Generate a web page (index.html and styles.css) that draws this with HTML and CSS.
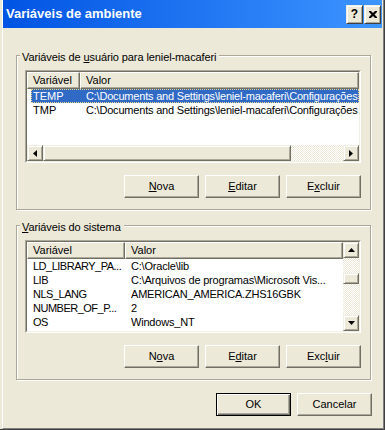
FILE: index.html
```html
<!DOCTYPE html>
<html lang="pt">
<head>
<meta charset="utf-8">
<title>Variáveis de ambiente</title>
<link rel="stylesheet" href="styles.css">
</head>
<body>
<div class="window">
  <div class="frame">
    <div class="titlebar">
      <span class="title">Variáveis de ambiente</span>
      <div class="tbtns">
        <span class="tbtn help">?</span>
        <span class="tbtn close"><svg width="8" height="7" viewBox="0 0 8 7"><path d="M0 0h2l2 2 2-2h2v1L5.5 3.5 8 6v1H6L4 5 2 7H0V6l2.5-2.5L0 1z"/></svg></span>
      </div>
    </div>
    <div class="client">
      <section class="group g1">
        <div class="legend">Variáveis de <u>u</u>suário para leniel-macaferi</div>
        <div class="lv">
          <div class="lv-in col">
            <div class="lv-head">
              <div class="hcol u1">Variável</div>
              <div class="hcol rest">Valor</div>
            </div>
            <div class="lv-rows">
              <div class="row sel"><span class="cell u1">TEMP</span><span class="cell c2">C:\Documents and Settings\leniel-macaferi\Configurações</span></div>
              <div class="row"><span class="cell u1">TMP</span><span class="cell c2">C:\Documents and Settings\leniel-macaferi\Configurações</span></div>
            </div>
            <div class="hscroll">
              <span class="sb-btn"><svg width="4" height="7" viewBox="0 0 4 7"><path d="M4 0v7L0 3.5z"/></svg></span>
              <span class="thumb-h"></span>
              <span class="track"></span>
              <span class="sb-btn"><svg width="4" height="7" viewBox="0 0 4 7"><path d="M0 0v7l4-3.5z"/></svg></span>
            </div>
          </div>
        </div>
        <div class="btnrow">
          <button class="btn"><u>N</u>ova</button>
          <button class="btn"><u>E</u>ditar</button>
          <button class="btn">E<u>x</u>cluir</button>
        </div>
      </section>

      <section class="group g2">
        <div class="legend"><u>V</u>ariáveis do sistema</div>
        <div class="lv">
          <div class="lv-in rowdir">
            <div class="lv-body">
              <div class="lv-head">
                <div class="hcol s1">Variável</div>
                <div class="hcol rest">Valor</div>
              </div>
              <div class="lv-rows">
                <div class="row"><span class="cell s1">LD_LIBRARY_PA...</span><span class="cell c2">C:\Oracle\lib</span></div>
                <div class="row"><span class="cell s1">LIB</span><span class="cell c2">C:\Arquivos de programas\Microsoft Vis...</span></div>
                <div class="row"><span class="cell s1">NLS_LANG</span><span class="cell c2">AMERICAN_AMERICA.ZHS16GBK</span></div>
                <div class="row"><span class="cell s1">NUMBER_OF_P...</span><span class="cell c2">2</span></div>
                <div class="row"><span class="cell s1">OS</span><span class="cell c2">Windows_NT</span></div>
                <div class="row"><span class="cell s1">Os2LibPath</span><span class="cell c2">C:\WINDOWS\system32\os2\dll;</span></div>
              </div>
            </div>
            <div class="vscroll">
              <span class="sb-btn"><svg width="7" height="4" viewBox="0 0 7 4"><path d="M0 4h7L3.5 0z"/></svg></span>
              <span class="track t1"></span>
              <span class="thumb-v"></span>
              <span class="track t2"></span>
              <span class="sb-btn"><svg width="7" height="4" viewBox="0 0 7 4"><path d="M0 0h7L3.5 4z"/></svg></span>
            </div>
          </div>
        </div>
        <div class="btnrow">
          <button class="btn">N<u>o</u>va</button>
          <button class="btn">E<u>d</u>itar</button>
          <button class="btn">Exc<u>l</u>uir</button>
        </div>
      </section>

      <div class="dlgbtns">
        <button class="btn default">OK</button>
        <button class="btn">Cancelar</button>
      </div>
    </div>
  </div>
</div>
</body>
</html>
```

FILE: styles.css
```css
* { box-sizing: border-box; }
html, body { margin: 0; padding: 0; }
body {
  font: 11px/13px "Liberation Sans", Arial, sans-serif;
  color: #000;
  background: #ECE9D8;
}
u { text-underline-offset: 1px; }

.window {
  width: 385px;
  height: 430px;
  background: #ECE9D8;
  padding-left: 2px;
  border-right: 1px solid #404040;
  border-bottom: 1px solid #404040;
}
.frame {
  height: 100%;
  border-left: 1px solid #fff;
  border-right: 1px solid #808080;
  border-bottom: 1px solid #808080;
  padding: 0 1px 1px 0;
  display: flex;
  flex-direction: column;
}

.titlebar {
  height: 28px;
  flex: none;
  background: linear-gradient(to right, #0054E3, #3D95FF);
  display: flex;
  align-items: center;
  justify-content: space-between;
  padding: 0 1px 0 3px;
}
.title {
  color: #fff;
  font-weight: bold;
  font-size: 13px;
  line-height: 16px;
}
.tbtns { display: flex; gap: 1px; }
.tbtn {
  width: 17px;
  height: 19px;
  background: #ECE9D8;
  border: 1px solid;
  border-color: #F1EFE2 #404040 #404040 #F1EFE2;
  box-shadow: inset 1px 1px 0 #fff, inset -1px -1px 0 #ACA899;
  display: flex;
  align-items: center;
  justify-content: center;
}
.tbtn.help { font-weight: bold; font-size: 12px; }
.tbtn svg { fill: #000; }

.client {
  flex: 1;
  padding-left: 13px;
}

.group {
  width: 355px;
  height: 155px;
  border: 1px solid #ACA899;
  box-shadow: 1px 1px 0 #fff, inset 1px 1px 0 #fff;
  padding: 0 9px 0 8px;
}
.g1 { margin-top: 27px; }
.g2 { margin-top: 15px; }
.legend {
  width: fit-content;
  margin: -5px 0 0 -5px;
  padding: 0 3px 0 2px;
  background: #ECE9D8;
  line-height: 13px;
  white-space: nowrap;
  letter-spacing: -0.1px;
}

.lv {
  width: 336px;
  height: 93px;
  margin-top: 6px;
  border: 1px solid;
  border-color: #ACA899 #fff #fff #ACA899;
}
.lv-in {
  height: 100%;
  border: 1px solid;
  border-color: #716F64 #F1EFE2 #F1EFE2 #716F64;
  background: #fff;
  overflow: hidden;
  display: flex;
}
.lv-in.col { flex-direction: column; }
.lv-in.rowdir { flex-direction: row; }
.lv-body {
  flex: 1;
  min-width: 0;
  display: flex;
  flex-direction: column;
}

.lv-head { display: flex; height: 17px; flex: none; }
.hcol {
  height: 17px;
  background: #ECE9D8;
  border: 1px solid;
  border-color: #fff #716F64 #716F64 #fff;
  box-shadow: inset -1px -1px 0 #ACA899;
  padding-left: 5px;
  line-height: 14px;
  white-space: nowrap;
  overflow: hidden;
}
.hcol.u1 { width: 53px; }
.hcol.s1 { width: 98px; }
.hcol.rest { flex: 1; }

.lv-rows { flex: 1; overflow: hidden; }
.row {
  display: flex;
  height: 14px;
  line-height: 14px;
  margin-left: 4px;
  white-space: nowrap;
}
.cell { overflow: hidden; }
.cell.u1 { width: 49px; flex: none; padding-left: 2px; }
.cell.s1 { width: 94px; flex: none; padding-left: 2px; letter-spacing: -0.5px; }
.cell.c2 { padding-left: 6px; flex: 1; min-width: 0; letter-spacing: -0.2px; }
.row.sel {
  background: #316AC5;
  color: #fff;
  outline: 1px dotted #E8D890;
  outline-offset: -1px;
}

.hscroll { display: flex; height: 16px; flex: none; }
.vscroll { display: flex; flex-direction: column; width: 16px; flex: none; }
.sb-btn, .thumb-h, .thumb-v {
  background: #ECE9D8;
  border: 1px solid;
  border-color: #F1EFE2 #716F64 #716F64 #F1EFE2;
  box-shadow: inset 1px 1px 0 #fff, inset -1px -1px 0 #ACA899;
}
.sb-btn {
  width: 16px;
  height: 16px;
  flex: none;
  display: flex;
  align-items: center;
  justify-content: center;
}
.sb-btn svg { fill: #000; }
.thumb-h { width: 248px; flex: none; }
.thumb-v { height: 11px; flex: none; }
.track {
  flex: 1;
  background: repeating-conic-gradient(#fff 0 25%, #ECE9D8 0 50%) 0 0 / 2px 2px;
}
.vscroll .t1 { flex: none; height: 15px; }

.btnrow {
  display: flex;
  justify-content: flex-end;
  gap: 6px;
  margin-top: 12px;
}
.btn {
  width: 75px;
  height: 23px;
  padding: 0;
  font: 11px/13px "Liberation Sans", Arial, sans-serif;
  color: #000;
  background: #ECE9D8;
  border: 1px solid;
  border-color: #fff #716F64 #716F64 #fff;
  box-shadow: inset -1px -1px 0 #ACA899;
  border-radius: 0;
}
.btn.default {
  border: 1px solid #000;
  box-shadow: inset 1px 1px 0 #fff, inset -1px -1px 0 #716F64, inset -2px -2px 0 #ACA899;
}
.dlgbtns {
  display: flex;
  justify-content: flex-end;
  gap: 6px;
  margin-top: 13px;
  padding-right: 10px;
}
```
